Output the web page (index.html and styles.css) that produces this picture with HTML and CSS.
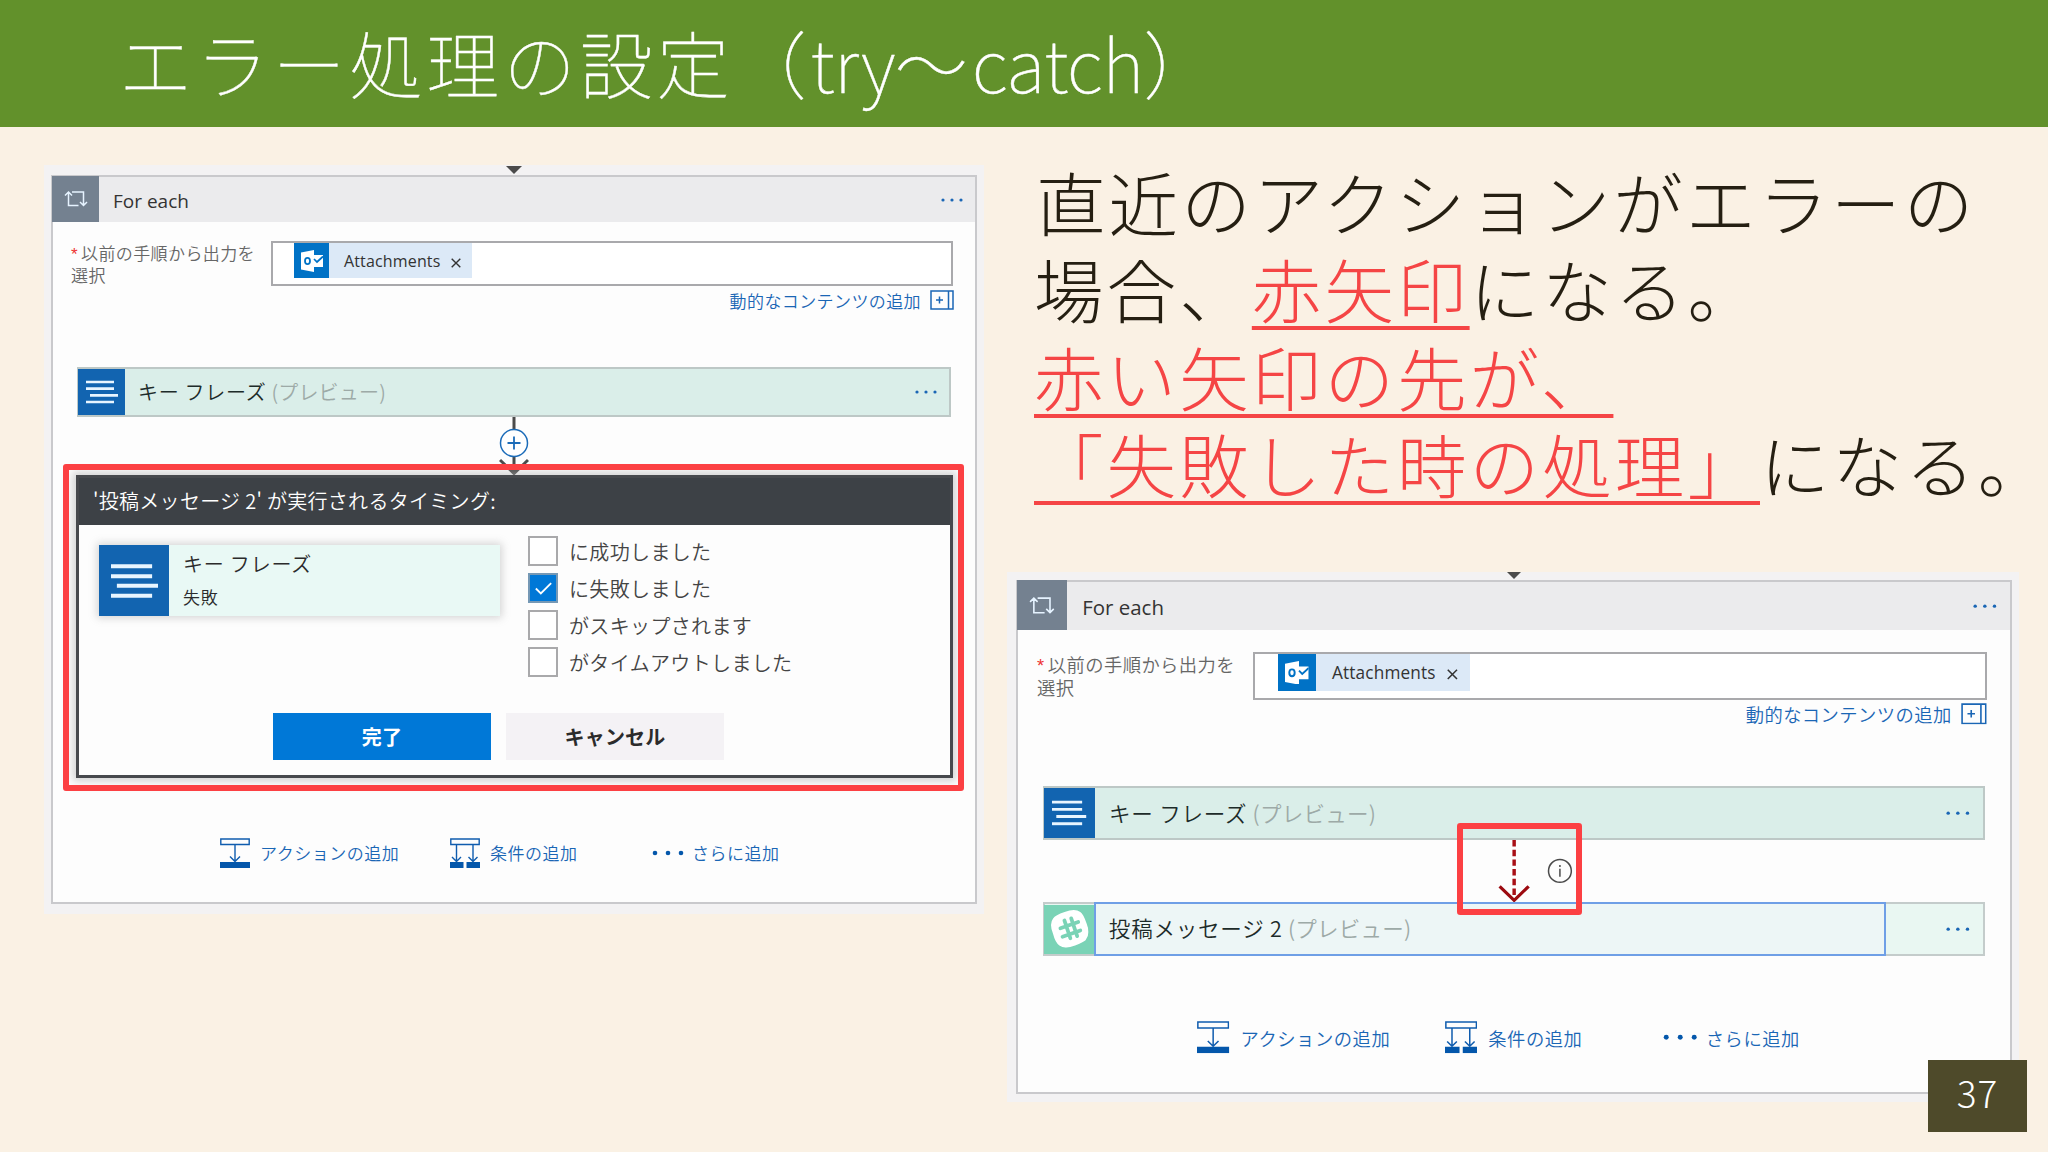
FILE: index.html
```html
<!DOCTYPE html>
<html lang="ja">
<head>
<meta charset="utf-8">
<title>エラー処理の設定（try～catch）</title>
<link rel="stylesheet" href="styles.css">
</head>
<body>
<svg class="defs" aria-hidden="true">
  <symbol id="loop" viewBox="0 0 24 18"><path d="M4.5 2.5V15.5H14.5M1 5.5L4.5 2L8 5.5M8 2H19.5V14.5M16 12L19.5 15.500L23 12" fill="none" stroke="#e6f3ff" stroke-width="1.5"/></symbol>
  <symbol id="dots" viewBox="0 0 22 4"><circle cx="2" cy="2" r="1.6"/><circle cx="11" cy="2" r="1.6"/><circle cx="20" cy="2" r="1.6"/></symbol>
  <symbol id="bigdots" viewBox="0 0 32 6"><circle cx="3" cy="3" r="2.3"/><circle cx="16" cy="3" r="2.3"/><circle cx="29" cy="3" r="2.3"/></symbol>
  <symbol id="lines" viewBox="0 0 32 24"><path d="M0 2H28M0 8.700H28M4 15.300H32M0 22H28" stroke="#e8f5ff" stroke-width="2.7" fill="none"/></symbol>
  <symbol id="outlook" viewBox="0 0 22 22"><path d="M0 2.500L13 0V22L0 19.500Z" fill="#fff"/><path d="M13 5H22V17H13Z" fill="#fff"/><path d="M13 9L16 12L22 6.500" fill="none" stroke="#0072c6" stroke-width="1.7"/><ellipse cx="6.500" cy="11" rx="2.500" ry="3.200" fill="none" stroke="#0072c6" stroke-width="1.8"/></symbol>
  <symbol id="panel" viewBox="0 0 24 20"><path d="M1 1H23V19H1ZM18.500 1V19M6 10H13M9.500 6.500V13.500" fill="none" stroke="#1a66b5" stroke-width="1.500"/></symbol>
  <symbol id="addstep" viewBox="0 0 30 30"><path d="M.8 1H29.200V6.500H.8ZM15 6.500V23M10 18.500L15 23.500L20 18.500" fill="none" stroke="#0f5cae" stroke-width="1.400"/><path d="M0 24H30V30H0Z" fill="#0457ab"/></symbol>
  <symbol id="addcond" viewBox="0 0 30 30"><path d="M.8 1H29.200V6.500H.8ZM6.500 6.500V23M2 19L6.500 23.500L11 19M23 6.500V23M18.500 19L23 23.500L27.500 19" fill="none" stroke="#0f5cae" stroke-width="1.400"/><path d="M0 24H13.500V30H0ZM16.500 24H30V30H16.500Z" fill="#0457ab"/></symbol>
  <symbol id="slack" viewBox="0 0 36 36"><path d="M13 2Q23-2 28 2Q31 4 34 13Q38 23 33 29Q31 31 23 34Q13 38 8 34Q4 31 2 23Q-2 13 2 8Q4 5 13 2Z" fill="#fff"/><path d="M12.800 10L18.500 27M19.300 8L25 25M9 17.500L26 11.500M11 25.500L28 19.500" fill="none" stroke="#7ad3b6" stroke-width="3.600" stroke-linecap="round"/></symbol>
</svg>

<header class="title"><h1>エラー処理の設定（<span class="latin">try</span>～<span class="latin">catch</span>）</h1></header>

<main class="content">
  <section class="stage stage-left">
    <i class="tip"></i>
    <div class="flow">
      <div class="flow-head">
        <span class="head-icon"><svg><use href="#loop"/></svg></span>
        <span class="head-text">For each</span>
        <svg class="dots"><use href="#dots"/></svg>
      </div>
      <div class="field">
        <div class="label"><b>*</b>以前の手順から出力を<br>選択</div>
        <div class="input"><span class="token"><span class="token-icon"><svg><use href="#outlook"/></svg></span><span class="token-text">Attachments</span><svg class="close" viewBox="0 0 10 10"><path d="M.7.7L9.300 9.300M9.300.7L.7 9.300"/></svg></span></div>
      </div>
      <div class="dynamic"><span>動的なコンテンツの追加</span><svg><use href="#panel"/></svg></div>
      <div class="action">
        <span class="action-icon"><svg><use href="#lines"/></svg></span>
        <span class="action-text">キー フレーズ<em>(プレビュー)</em></span>
        <svg class="dots"><use href="#dots"/></svg>
      </div>
      <div class="connector">
        <svg viewBox="0 0 30 58"><path d="M15 0V55M1 43L15 56.500L29 43" fill="none" stroke="#4b4b4b" stroke-width="3"/><circle cx="15" cy="26" r="13.500" fill="#fff" stroke="#1c6cb9" stroke-width="1.500"/><path d="M15 19.500V32.500M8.500 26H21.500" stroke="#1c6cb9" stroke-width="1.800"/></svg>
      </div>
      <div class="dialog">
        <div class="dialog-head">'投稿メッセージ 2' が実行されるタイミング:</div>
        <div class="dialog-body">
          <div class="card">
            <span class="card-icon"><svg><use href="#lines"/></svg></span>
            <span class="card-text"><span>キー フレーズ</span><small>失敗</small></span>
          </div>
          <ul class="checks">
            <li><i></i>に成功しました</li>
            <li><i class="on"><svg viewBox="0 0 16 12"><path d="M.8 6L5.500 10.700L15.200 1"/></svg></i>に失敗しました</li>
            <li><i></i>がスキップされます</li>
            <li><i></i>がタイムアウトしました</li>
          </ul>
        </div>
        <div class="buttons"><span class="btn primary">完了</span><span class="btn">キャンセル</span></div>
        <div class="mark mark-dialog"></div>
      </div>
      <div class="adders">
        <span class="adder a1"><svg><use href="#addstep"/></svg>アクションの追加</span>
        <span class="adder a2"><svg><use href="#addcond"/></svg>条件の追加</span>
        <span class="adder a3"><svg><use href="#bigdots"/></svg>さらに追加</span>
      </div>
    </div>
  </section>

  <div class="right">
    <div class="message">
      <p>直近のアクションがエラーの</p>
      <p>場合、<u>赤矢印</u>になる。</p>
      <p><u>赤い矢印の先が、</u></p>
      <p><u>「失敗した時の処理」</u>になる。</p>
    </div>
    <section class="stage stage-right">
      <i class="tip"></i>
      <div class="flow">
        <div class="flow-head">
          <span class="head-icon"><svg><use href="#loop"/></svg></span>
          <span class="head-text">For each</span>
          <svg class="dots"><use href="#dots"/></svg>
        </div>
        <div class="field">
          <div class="label"><b>*</b>以前の手順から出力を<br>選択</div>
          <div class="input"><span class="token"><span class="token-icon"><svg><use href="#outlook"/></svg></span><span class="token-text">Attachments</span><svg class="close" viewBox="0 0 10 10"><path d="M.7.7L9.300 9.300M9.300.7L.7 9.300"/></svg></span></div>
        </div>
        <div class="dynamic"><span>動的なコンテンツの追加</span><svg><use href="#panel"/></svg></div>
        <div class="action">
          <span class="action-icon"><svg><use href="#lines"/></svg></span>
          <span class="action-text">キー フレーズ<em>(プレビュー)</em></span>
          <svg class="dots"><use href="#dots"/></svg>
        </div>
        <div class="connector failed">
          <svg viewBox="0 0 30 58"><path d="M15 0V54" fill="none" stroke="#a80f16" stroke-width="3.200" stroke-dasharray="6 3"/><path d="M1.500 43L15 56L28.500 43" fill="none" stroke="#9c0a10" stroke-width="3"/></svg>
          <svg class="info" viewBox="0 0 24 24"><circle cx="12" cy="12" r="10.600" fill="none" stroke="#4b4b4b" stroke-width="1.400"/><path d="M12 10V17.500M12 6.500V8.300" stroke="#4b4b4b" stroke-width="1.400"/></svg>
          <div class="mark mark-arrow"></div>
        </div>
        <div class="action message-action">
          <span class="action-icon"><svg><use href="#slack"/></svg></span>
          <span class="action-text">投稿メッセージ 2<em>(プレビュー)</em></span>
          <svg class="dots"><use href="#dots"/></svg>
        </div>
        <div class="adders">
          <span class="adder a1"><svg><use href="#addstep"/></svg>アクションの追加</span>
          <span class="adder a2"><svg><use href="#addcond"/></svg>条件の追加</span>
          <span class="adder a3"><svg><use href="#bigdots"/></svg>さらに追加</span>
        </div>
      </div>
    </section>
  </div>
</main>
<div class="page-number">37</div>
</body>
</html>
```
FILE: styles.css
```css
* { box-sizing: border-box; }
body {
  margin: 0;
  width: 2048px;
  height: 1152px;
  overflow: hidden;
  position: relative;
  background: #faf1e4;
  font-family: "Noto Sans CJK JP", sans-serif;
  font-weight: 300;
}
svg { display: block; flex: none; }
.defs { position: absolute; width: 0; height: 0; }

.title { height: 127px; background: #62912b; padding-left: 119px; display: flex; align-items: center; }
.title h1 { margin: 0; font-size: 73px; line-height: 120px; font-weight: 100; color: #fff; letter-spacing: 3.8px; padding-bottom: 5px; white-space: nowrap; -webkit-text-stroke: .4px #fff; }
.title .latin { letter-spacing: -.6px; }

.content { display: flex; padding: 38px 0 0 44px; align-items: flex-start; }
.stage { position: relative; background: #f3f2f3; }
.stage-left { width: 940px; height: 749px; padding: 10px 7px; flex: none; }
.tip { position: absolute; left: 462px; top: 1px; border: 8px solid transparent; border-top-color: #4b4b4b; border-bottom: 0; }

.flow { width: 926px; height: 729px; border: 2px solid #c9c9cc; background: #fdfdfd; font-size: 20px; font-weight: 350; color: #2b2b2b; }
.flow-head { display: flex; align-items: center; height: 45px; background: #ebebed; padding-right: 12px; }
.head-icon { width: 47px; height: 46px; margin: -1px 0 0 -1px; background: #748190; display: grid; place-items: center; }
.head-icon svg { width: 24px; height: 18px; }
.head-text { margin-left: 14px; flex: 1; font: 400 19px/28px "Open Sans", sans-serif; padding-top: 2px; color: #333; }
.dots { width: 22px; height: 4px; fill: #1a66b5; }

.field { display: flex; padding: 19px 22px 0 18px; }
.label { width: 200px; font-family: "Liberation Sans", "Noto Sans CJK JP", sans-serif; font-size: 17px; letter-spacing: .4px; line-height: 22px; color: #666; padding-top: 3px; white-space: nowrap; }
.label b { display: inline-block; width: 10px; color: #e33; font-weight: 400; }
.input { flex: 1; height: 45px; border: 2px solid #a9a9ac; padding-left: 21px; background: #fff; }
.token { display: flex; align-items: center; width: 178px; height: 35px; background: #dce9f7; }
.token-icon { width: 35px; height: 35px; background: #0072c6; display: grid; place-items: center; }
.token-icon svg { width: 22px; height: 22px; }
.token-text { width: 107px; margin-left: 15px; font: 400 16px/30px "Open Sans", sans-serif; letter-spacing: .15px; padding-top: 1px; color: #333; }
.close { width: 10px; height: 10px; margin-top: 4px; fill: none; stroke: #333; stroke-width: 1.4; }
.dynamic { display: flex; align-items: center; justify-content: flex-end; gap: 9px; height: 24px; padding-right: 21px; font-size: 17px; letter-spacing: .4px; color: #1a66b5; }
.dynamic svg { width: 24px; height: 20px; }

.action { display: flex; align-items: center; margin: 55px 24px 0; height: 50px; border: 2px solid #bdc8c6; background: #daeee9; padding-right: 12px; }
.action-icon { width: 47px; height: 46px; margin-left: -1px; background: #1264b0; display: grid; place-items: center; }
.action-icon svg { width: 32px; height: 24px; }
.action-text { flex: 1; padding-left: 13px; letter-spacing: .7px; line-height: 44px; white-space: nowrap; color: #1d2b29; }
.action-text em { font-style: normal; color: #9daaa7; margin-left: 5px; letter-spacing: .2px; }
.connector { position: relative; height: 58px; display: flex; justify-content: center; }
.connector svg { width: 30px; height: 58px; }

.dialog { position: relative; margin-left: 23px; width: 877px; height: 303px; border: 3px solid #47494d; background: #fdfdfd; box-shadow: 0 0 8px 3px #aaa8; }
.dialog-head { height: 47px; line-height: 46px; padding-left: 14px; background: #3d4146; color: #fff; letter-spacing: .3px; white-space: nowrap; }
.dialog-body { display: flex; padding: 8px 0 0 20px; }
.card { display: flex; width: 401px; height: 71px; margin-top: 12px; background: #e9f9f5; box-shadow: 0 0 8px 2px #8885; }
.card-icon { width: 70px; background: #1264b0; display: grid; place-items: center; }
.card-icon svg { width: 47px; height: 36px; }
.card-text { display: flex; flex-direction: column; padding: 4px 0 0 14px; line-height: 29px; letter-spacing: .8px; }
.card-text small { font-size: 17px; line-height: 37px; }
.checks { margin: 0 0 0 28px; padding: 0; list-style: none; }
.checks li { display: flex; align-items: center; gap: 11px; height: 36.9px; letter-spacing: .35px; color: #444; }
.checks i { width: 30px; height: 30px; border: 2px solid #a9a9ab; display: grid; place-items: center; background: #fff; }
.checks .on { background: #0078d7; border-color: #7598b5; }
.checks svg { width: 17px; height: 13px; fill: none; stroke: #fff; stroke-width: 1.7; }
.buttons { display: flex; gap: 15px; padding: 32px 0 0 194px; }
.btn { width: 218px; height: 47px; line-height: 47px; text-align: center; background: #f4f2f5; font-weight: 700; letter-spacing: .2px; }
.primary { background: #0078d7; color: #fff; }
.mark { position: absolute; border: 6px solid #fc4043; border-radius: 3px; }
.mark-dialog { left: -16px; top: -14px; width: 901px; height: 327px; }

.adders { display: flex; padding: 58px 0 0 167px; height: 91px; color: #1a66b5; font-size: 17px; letter-spacing: .5px; }
.adder { display: flex; align-items: center; gap: 10px; white-space: nowrap; }
.adder svg { width: 30px; height: 30px; }
.a1 { width: 230px; }
.a2 { width: 202px; }
.a3 { gap: 8px; }
.a3 svg { width: 32px; height: 6px; fill: #0457ab; }

.right { margin-left: 23px; }
.message { margin: -1px 0 0 27px; height: 408px; font-family: "Liberation Sans", "Noto Sans CJK JP", sans-serif; font-size: 69.5px; letter-spacing: 3.1px; line-height: 87.3px; color: #251f12; white-space: nowrap; }
.message p { margin: 0; }
.message p:first-child { padding-left: 2px; }
.message u { color: #f54545; text-decoration-thickness: 4px; text-underline-offset: 8px; text-decoration-skip-ink: none; }
.stage-right { zoom: 1.077; width: 940px; height: 492px; padding: 7px 8px; }
.stage-right .flow { width: 925px; height: 478px; }
.stage-right .tip { left: 464px; top: 0; border-width: 7px; border-bottom: 0; }
.stage-right .field { padding-top: 20px; padding-right: 21px; }
.stage-right .label { width: 201px; padding-top: 2px; }
.stage-right .action { margin: 55px 23px 0 24px; }
.stage-right .message-action { margin-top: 0; background: #e9f7f2; border-color: #c4cccb; }
.message-action .action-icon { background: #7ad3b6; }
.message-action .action-icon svg { width: 35px; height: 35px; }
.message-action .action-text { align-self: stretch; margin: -2px 56px -2px -1px; padding-left: 12px; border: 2px solid #6f9fe6; background: #edf6f6; }
.stage-right .adders { padding-top: 59px; height: 92px; }
.failed { z-index: 1; }
.connector .info { position: absolute; left: 492px; top: 17px; width: 24px; height: 24px; }
.mark-arrow { left: 408px; top: -16px; width: 116px; height: 86px; }
.page-number { position: absolute; left: 1928px; top: 1060px; width: 99px; height: 72px; line-height: 64px; text-align: center; background: #4e4a2a; color: #fff; font-size: 37px; letter-spacing: 1px; z-index: 2; }
```
